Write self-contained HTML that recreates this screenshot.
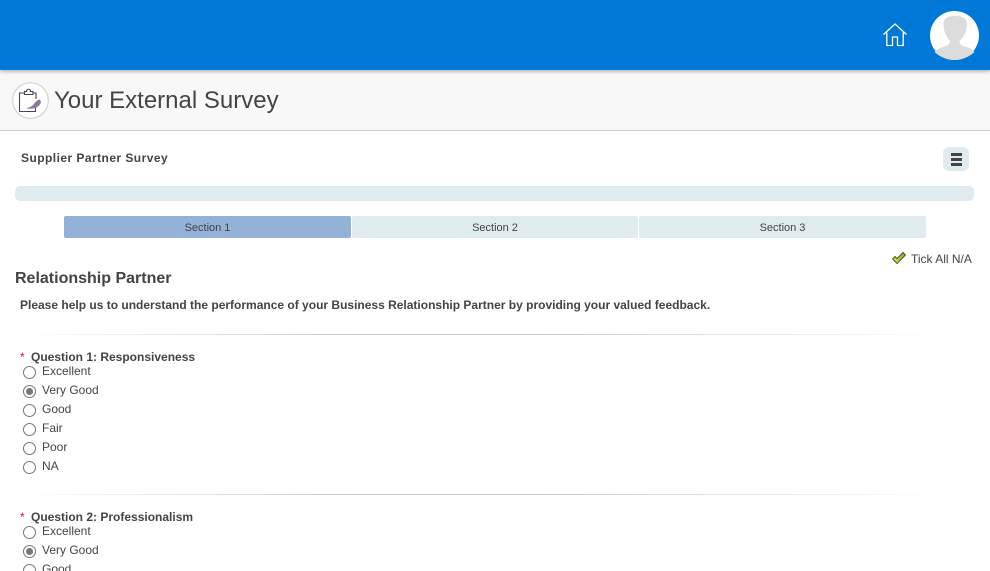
<!DOCTYPE html>
<html><head><meta charset="utf-8"><style>
html,body{margin:0;padding:0;width:990px;height:571px;overflow:hidden}
body{background:#fff;font-family:"Liberation Sans",Arial,sans-serif;color:#444}
#w{position:relative;width:990px;height:571px;overflow:hidden;background:#fff}
.a{position:absolute;white-space:nowrap}
.hdr{left:0;top:0;width:990px;height:70px;background:#0078d7;box-shadow:0 1px 4px rgba(0,0,0,.35);z-index:2}
.sub{left:0;top:70px;width:990px;height:60px;background:#f8f8f8;border-bottom:1px solid #ccc}
.tab{top:216px;height:22px;line-height:24px;text-align:center;font-size:11px;background:#e0ebf0;border-radius:2px;color:#444}
.hr{left:15px;width:959px;height:1px;background:linear-gradient(90deg,#fff 0,#ccc 35%,#ccc 55%,#fff 97%)}
.q{left:31px;font-size:12px;font-weight:bold;line-height:14px}
.st{left:20px;font-size:12px;color:#c0143c;line-height:14px}
.o{left:42px;font-size:12px;line-height:14px}
.r{left:23px;width:11px;height:11px;border:1px solid #767676;border-radius:50%;background:#fff}
.r.c:after{content:"";position:absolute;left:2px;top:2px;width:7px;height:7px;border-radius:50%;background:#787878}
</style></head><body><div id="w">
<div class="a hdr">
<svg class="a" style="left:882px;top:22px" width="26" height="26" viewBox="0 0 26 26" fill="none" stroke="#fff" stroke-width="1.300" stroke-linejoin="round"><path d="M1.500 12.500 13 2 24.500 12.500M4.800 10.500V23.500h5.700V15h5v8.500h5.700V10.500"/></svg>
<svg class="a" style="left:930px;top:11px" width="49" height="49" viewBox="0 0 49 49"><circle cx="24.500" cy="24.500" r="24.500" fill="#fff"/><path d="M4.500 41C8 37 13 36 17.500 34.500 19 33.500 20 32 20 30 16.500 26 13.500 21 13.500 13 13.500 7 18 5 25 5 32 5 37 7 37 13 37 21 33.500 26 29.500 30 29.500 32 30.500 33.500 32 34.500 36.500 36 41 37 44.500 41 39 46 32 49 24.500 49 17 49 10 46 4.500 41z" fill="#dcdcdc"/></svg>
</div>
<div class="a sub"></div>
<svg class="a" style="left:12px;top:82px" width="37" height="37" viewBox="0 0 37 37" fill="none"><circle cx="18.500" cy="18.500" r="17.800" fill="#fff" stroke="#ccc"/><path d="M12.500 11H7.500v18.500h16v-4M21 11h3v6M12.500 12.500V9.500h2c0-3 4-3 4 0h2.500v3z" stroke="#4b3f63" stroke-width="1.100"/><path d="M14 26c3-.5 5-1 7-3 2-2 3-4 5-5l2-.5 1 3c-1 2.500-3 4.500-6 5.500-3 1-6 1-9 0z" fill="#8a7a98"/></svg>
<div class="a" style="left:54px;top:86px;font-size:24px;line-height:30px;color:#444">Your External Survey</div>
<div class="a" style="left:21px;top:151px;font-size:12px;font-weight:bold;line-height:15px;letter-spacing:.45px">Supplier Partner Survey</div>
<div class="a" style="left:943px;top:147px;width:26px;height:24px;background:#e0ebf0;border-radius:6px"></div>
<div class="a" style="left:951px;top:153px;width:11px;height:3px;background:#444"></div>
<div class="a" style="left:951px;top:158px;width:11px;height:3px;background:#444"></div>
<div class="a" style="left:951px;top:163px;width:11px;height:3px;background:#444"></div>
<div class="a" style="left:15px;top:186px;width:959px;height:15px;background:#e0ebf0;border-radius:5px"></div>
<div class="a tab" style="left:64px;width:287px;background:#94b1d7">Section 1</div>
<div class="a tab" style="left:352px;width:286px">Section 2</div>
<div class="a tab" style="left:639px;width:287px">Section 3</div>
<svg class="a" style="left:891px;top:251px" width="16" height="14" viewBox="0 0 16 14"><defs><linearGradient id="g" x1="0" y1="1" x2="1" y2="0"><stop offset="0" stop-color="#e0e838"/><stop offset="1" stop-color="#78aa20"/></linearGradient></defs><path d="M1.500 8 4 5.500 6 7.500 12 1.500 14.500 4 6 12.500z" fill="url(#g)" stroke="#333" stroke-width=".8"/></svg>
<div class="a" style="left:911px;top:252px;font-size:12px;line-height:14px">Tick All N/A</div>
<div class="a" style="left:15px;top:269px;font-size:16px;font-weight:bold;line-height:19px">Relationship Partner</div>
<div class="a" style="left:20px;top:298px;font-size:12px;font-weight:bold;line-height:14px">Please help us to understand the performance of your Business Relationship Partner by providing your valued feedback.</div>
<div class="a hr" style="top:334px"></div>
<div class="a st" style="top:350px">*</div><div class="a q" style="top:350px">Question 1: Responsiveness</div>
<div class="a o" style="top:364px">Excellent</div><div class="a r" style="top:366px"></div>
<div class="a o" style="top:383px">Very Good</div><div class="a r c" style="top:385px"></div>
<div class="a o" style="top:402px">Good</div><div class="a r" style="top:404px"></div>
<div class="a o" style="top:421px">Fair</div><div class="a r" style="top:423px"></div>
<div class="a o" style="top:440px">Poor</div><div class="a r" style="top:442px"></div>
<div class="a o" style="top:459px">NA</div><div class="a r" style="top:461px"></div>
<div class="a hr" style="top:494px"></div>
<div class="a st" style="top:510px">*</div><div class="a q" style="top:510px">Question 2: Professionalism</div>
<div class="a o" style="top:524px">Excellent</div><div class="a r" style="top:526px"></div>
<div class="a o" style="top:543px">Very Good</div><div class="a r c" style="top:545px"></div>
<div class="a o" style="top:562px">Good</div><div class="a r" style="top:564px"></div>
</div></body></html>
